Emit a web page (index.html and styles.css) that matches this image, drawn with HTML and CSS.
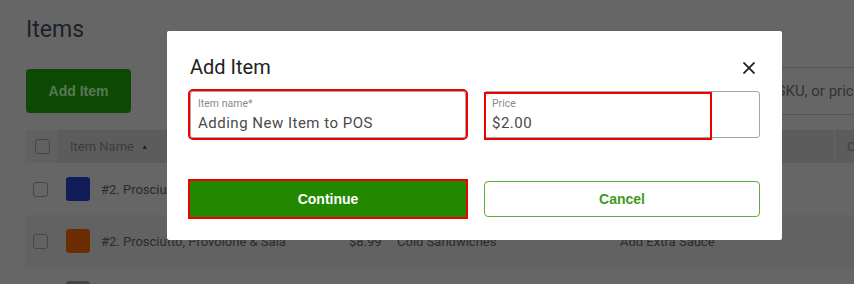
FILE: index.html
```html
<!DOCTYPE html>
<html lang="en">
<head>
    <meta charset="UTF-8">
    <meta name="viewport" content="width=device-width, initial-scale=1.0">
    <title>Items - Add Item</title>
    <link rel="stylesheet" href="styles.css">
</head>
<body>

<div class="page">
    <h1 class="page-title">Items</h1>

    <div class="toolbar">
        <button class="btn-add">Add Item</button>
        <div class="search">Search by item name, SKU, or price</div>
    </div>

    <div class="table">
        <div class="table-head">
            <div class="head-check"><span class="checkbox"></span></div>
            <div class="head-name">Item Name <span class="sort">&#9650;</span></div>
            <div class="head-gap"></div>
            <div class="head-cell">Channels</div>
        </div>
        <div class="row">
            <span class="checkbox"></span>
            <span class="swatch blue"></span>
            <span class="cell-name">#2. Prosciutto, Provolone &amp; Sala</span>
            <span class="cell-price">$8.99</span>
            <span class="cell-cat">Cold Sandwiches</span>
            <span class="cell-mod">Add Extra Sauce</span>
        </div>
        <div class="row alt">
            <span class="checkbox"></span>
            <span class="swatch orange"></span>
            <span class="cell-name">#2. Prosciutto, Provolone &amp; Sala</span>
            <span class="cell-price">$8.99</span>
            <span class="cell-cat">Cold Sandwiches</span>
            <span class="cell-mod">Add Extra Sauce</span>
        </div>
        <div class="row">
            <span class="checkbox"></span>
            <span class="swatch grey"></span>
            <span class="cell-name">#3. Turkey Club</span>
            <span class="cell-price">$8.99</span>
            <span class="cell-cat">Cold Sandwiches</span>
            <span class="cell-mod">Add Extra Sauce</span>
        </div>
    </div>
</div>

<div class="modal">
    <div class="modal-head">
        <h2>Add Item</h2>
        <button class="close" aria-label="Close">
            <svg width="12" height="12" viewBox="0 0 12 12"><path d="M0.5 0.5 L11.5 11.5 M11.5 0.5 L0.5 11.5" stroke="#222" stroke-width="1.8" fill="none"/></svg>
        </button>
    </div>

    <div class="fields">
        <div class="field marked">
            <label>Item name*</label>
            <div class="value">Adding New Item to POS</div>
        </div>
        <div class="field">
            <label>Price</label>
            <div class="value">$2.00</div>
            <span class="mark-price"></span>
        </div>
    </div>

    <div class="actions">
        <button class="btn-continue">Continue</button>
        <button class="btn-cancel">Cancel</button>
    </div>
</div>

</body>
</html>
```

FILE: styles.css
```css
/* Reset */
* {
    margin: 0;
    padding: 0;
    box-sizing: border-box;
}
body {
    font-family: Roboto, 'Noto Sans', sans-serif;
    background: #666666;
    width: 854px;
    height: 284px;
    overflow: hidden;
    position: relative;
}
button {
    font: inherit;
    border: none;
    background: none;
}
/* Page behind the overlay (already dimmed) */
.page {
    width: 1200px;
    padding: 17px 0 0 26px;
}
.page-title {
    font-size: 23px;
    font-weight: 400;
    line-height: 26px;
    color: #1a222a;
}
.toolbar {
    display: flex;
    align-items: center;
    margin-top: 24px;
    height: 48px;
}
.btn-add {
    width: 105px;
    height: 44px;
    background: #0c4a04;
    color: #5a7755;
    border-radius: 4px;
    font-family: 'Liberation Sans', Arial, sans-serif;
    font-weight: bold;
    font-size: 14px;
}
.search {
    margin-left: 485px;
    width: 520px;
    height: 48px;
    border-top: 1px solid #555;
    border-bottom: 1px solid #555;
    padding-left: 14px;
    line-height: 46px;
    font-size: 15px;
    color: #333;
}
/* Table */
.table {
    margin-top: 15px;
}
.table-head {
    display: flex;
    height: 33px;
    background: #5c5c5c;
    font-size: 13px;
    color: #3c3c3c;
}
.head-check {
    width: 32px;
    background: #616161;
    display: flex;
    align-items: center;
    justify-content: center;
}
.head-name {
    width: 250px;
    padding-left: 12px;
    line-height: 33px;
}
.sort {
    font-size: 7px;
    color: #1e1e1e;
    margin-left: 4px;
    vertical-align: 2px;
}
.head-gap {
    width: 526px;
}
.head-cell {
    border-left: 1px solid #666;
    padding-left: 12px;
    line-height: 33px;
}
.row {
    display: flex;
    align-items: center;
    height: 52px;
    font-size: 13px;
    color: #2b2b2b;
}
.row.alt {
    background: #626262;
}
.row .checkbox {
    margin-left: 7px;
}
.checkbox {
    display: inline-block;
    width: 15px;
    height: 15px;
    border: 1.5px solid #474747;
    border-radius: 3px;
}
.swatch {
    width: 24px;
    height: 24px;
    border-radius: 3px;
    margin-left: 18px;
}
.swatch.blue { background: #101d58; }
.swatch.orange { background: #6a2c00; }
.swatch.grey { background: #454545; }
.cell-name {
    width: 248px;
    margin-left: 11px;
}
.cell-price {
    width: 48px;
}
.cell-cat {
    width: 223px;
}
/* Modal */
.modal {
    position: absolute;
    left: 167px;
    top: 31px;
    width: 615px;
    height: 209px;
    background: #fff;
    border-radius: 2px;
    padding: 0 22px 0 23px;
}
.modal-head {
    display: flex;
    justify-content: space-between;
    align-items: center;
    height: 60px;
    padding-top: 12px;
}
.modal-head h2 {
    font-size: 20px;
    font-weight: 400;
    color: #222;
}
.close {
    width: 12px;
    height: 12px;
    margin-right: 5px;
    margin-top: 1px;
    cursor: pointer;
}
.close svg {
    display: block;
}
.fields {
    display: grid;
    grid-template-columns: 1fr 1fr;
    gap: 18px;
}
.field {
    position: relative;
    height: 47px;
    border: 1px solid #a5a5a5;
    border-radius: 3px;
    padding: 6px 7px 0;
}
.field label {
    display: block;
    font-size: 10.5px;
    line-height: 12px;
    color: #8a8a8a;
}
.value {
    margin-top: 4px;
    font-size: 15px;
    letter-spacing: 0.5px;
    color: #4a4a4a;
}
/* Red review markers */
.marked {
    outline: 2px solid #f00000;
    outline-offset: 0;
}
.mark-price {
    position: absolute;
    left: -1px;
    top: 0;
    width: 228px;
    height: 48px;
    border: 2px solid #f00000;
}
.actions {
    display: grid;
    grid-template-columns: 1fr 1fr;
    gap: 18px;
    margin-top: 43px;
}
.btn-continue,
.btn-cancel {
    height: 36px;
    border-radius: 4px;
    font-family: 'Liberation Sans', Arial, sans-serif;
    font-weight: bold;
    font-size: 14px;
    cursor: pointer;
}
.btn-continue {
    background: #218800;
    color: #fff;
    border-radius: 0;
    outline: 2px solid #f00000;
}
.btn-cancel {
    border: 1.5px solid #5aae3a;
    color: #3d9a20;
}
```
